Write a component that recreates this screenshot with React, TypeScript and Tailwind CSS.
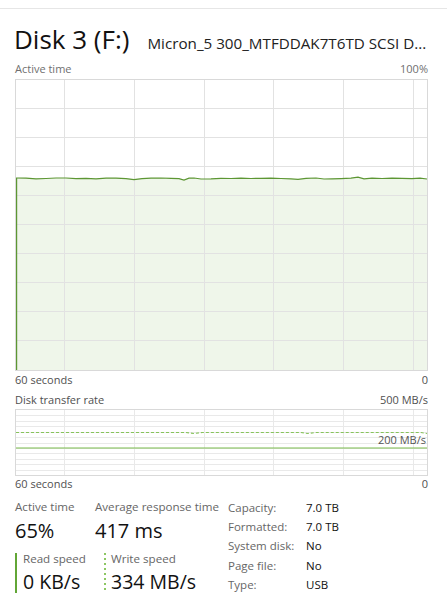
import React from "react";

const W1 = 411;
const H1 = 290;
const vx = [48.5, 118.5, 188.5, 257.5, 327.5, 397.5];

function wave(): string {
  const base = 98;
  const offs: [number, number][] = [
    [0, 0], [10, 0.2], [20, 0.8], [30, 0.5], [40, 0], [50, 0], [60, 0.6], [70, 0.3], [80, 0.8], [90, 0.2],
    [100, 0.1], [110, 0.6], [118, 1.6], [126, 0.6], [135, 0.2], [145, 0], [155, 0.4], [163, 0.6], [168, 2.0], [173, 0.2],
    [178, 0], [185, 1.0], [195, 0.8], [205, 0.3], [215, 0.5], [225, 0.1], [235, 0.5], [245, 0.4], [255, 0.2], [265, 0.5],
    [275, 0.9], [282, 1.4], [290, 0.4], [300, 0], [308, 1.0], [316, 0.9], [325, 0.6], [335, 0.2], [342, -0.8], [348, 0.8],
    [356, 0.2], [366, 0.5], [376, 0.2], [386, 0.3], [396, 0.6], [404, 0.2], [411, 1.0],
  ];
  return offs.map(([x, o], i) => `${i === 0 ? "M" : "L"}${x} ${base + o}`).join(" ");
}

function Chart1() {
  const d = wave();
  const rows = Array.from({ length: 9 }, (_, i) => Math.round((i + 1) * 29.05 - 1) + 0.5);
  return (
    <div className="ml-[15px] mr-[19px] h-[292px] border border-[#d9d9d9]">
      <svg width={W1} height={H1} viewBox={`0 0 ${W1} ${H1}`} className="block">
        <path d={`${d} L${W1} ${H1} L0 ${H1} Z`} fill="#eff6ea" />
        {rows.map((y) => (
          <line key={y} x1={0} x2={W1} y1={y} y2={y} stroke="#e2e2e2" strokeWidth={1} />
        ))}
        {vx.map((x) => (
          <line key={x} x1={x} x2={x} y1={0} y2={H1} stroke="#e2e2e2" strokeWidth={1} />
        ))}
        <path d={d} fill="none" stroke="#5c9633" strokeWidth={1.2} />
        <line x1={0.6} x2={0.6} y1={98} y2={H1} stroke="#5c9633" strokeWidth={1.2} />
      </svg>
    </div>
  );
}

function Chart2() {
  const H = 65;
  const rows = Array.from({ length: 11 }, (_, i) => Math.round(((i + 1) * H) / 12) + 0.5);
  return (
    <div className="ml-[15px] mr-[19px] h-[67px] border border-[#d9d9d9] relative">
      <svg width={W1} height={H} viewBox={`0 0 ${W1} ${H}`} className="block">
        {rows.map((y) => (
          <line key={y} x1={0} x2={W1} y1={y} y2={y} stroke="#e9e9e9" strokeWidth={1} />
        ))}
        {vx.map((x) => (
          <line key={x} x1={x} x2={x} y1={0} y2={H} stroke="#e9e9e9" strokeWidth={1} />
        ))}
        <line x1={0} x2={W1} y1={38} y2={38} stroke="#7bbb4d" strokeWidth={1.2} />
        <path
          d="M0 22.5 L170 22.5 L178 23.5 L186 22.5 L285 22.5 L292 23.5 L300 22.5 L405 22.5 L411 23.5"
          fill="none"
          stroke="#86c35a"
          strokeWidth={1.1}
          strokeDasharray="3 2"
        />
      </svg>
      <div className="absolute right-[1px] top-[23px] text-[11px] leading-[14px] text-[#555]">200 MB/s</div>
    </div>
  );
}

function Row({ l, r, cls = "" }: { l: string; r: string; cls?: string }) {
  return (
    <div className={`ml-[15px] mr-[19px] flex justify-between text-[11px] leading-[14px] h-[14px] ${cls}`}>
      <span>{l}</span>
      <span>{r}</span>
    </div>
  );
}

export default function App() {
  return (
    <div
      className="w-[447px] h-[612px] bg-white overflow-hidden text-[#1a1a1a]"
      style={{ fontFamily: '"Open Sans", "Noto Sans", sans-serif' }}
    >
      <div className="h-[8px]" />
      <div className="border-t border-[#e6e6e6]" />
      <div className="flex items-baseline mt-[13px] pl-[14px] h-[34px]">
        <span className="text-[26px] leading-[34px] text-[#111]">Disk 3 (F:)</span>
        <span className="ml-[18px] text-[15.2px] leading-[20px] text-[#222] whitespace-nowrap">
          Micron_5 300_MTFDDAK7T6TD SCSI D...
        </span>
      </div>
      <Row l="Active time" r="100%" cls="mt-[6px] text-[#6f6f6f]" />
      <div className="h-[3px]" />
      <Chart1 />
      <Row l="60 seconds" r="0" cls="mt-[2px] text-[#505050]" />
      <Row l="Disk transfer rate" r="500 MB/s" cls="mt-[6px] text-[#505050]" />
      <div className="h-[2px]" />
      <Chart2 />
      <Row l="60 seconds" r="0" cls="mt-[1px] text-[#505050]" />

      <div className="ml-[15px] mt-[8px] flex">
        <div className="w-[213px] flex flex-col">
          <div className="flex">
            <div className="w-[80px]">
              <div className="text-[11.6px] leading-[16px] text-[#666]">Active time</div>
              <div className="mt-[3px] text-[20px] leading-[26px] text-[#111]">65%</div>
            </div>
            <div>
              <div className="text-[11.6px] leading-[16px] text-[#666] whitespace-nowrap">Average response time</div>
              <div className="mt-[3px] text-[20px] leading-[26px] text-[#111]">417 ms</div>
            </div>
          </div>
          <div className="flex mt-[7px]">
            <div className="w-[89px] flex">
              <div className="mt-[2px] w-[2px] h-[40px] bg-[#62a636]" />
              <div className="ml-[6px]">
                <div className="text-[11.6px] leading-[16px] text-[#666]">Read speed</div>
                <div className="mt-[2px] text-[19.5px] leading-[26px] text-[#111] whitespace-nowrap">0 KB/s</div>
              </div>
            </div>
            <div className="flex">
              <div className="mt-[2px] w-[2px] h-[40px] bg-[repeating-linear-gradient(to_bottom,#8cc763_0px,#8cc763_2px,transparent_2px,transparent_5px)]" />
              <div className="ml-[5px]">
                <div className="text-[11.6px] leading-[16px] text-[#666]">Write speed</div>
                <div className="mt-[2px] text-[19.5px] leading-[26px] text-[#111] whitespace-nowrap">334 MB/s</div>
              </div>
            </div>
          </div>
        </div>
        <div className="grid grid-cols-[78px_auto] text-[11.5px] leading-[18px]">
          <span className="text-[#666]">Capacity:</span>
          <span className="text-[#111]">7.0 TB</span>
          <span className="text-[#666]">Formatted:</span>
          <span className="text-[#111]">7.0 TB</span>
          <span className="text-[#666]">System disk:</span>
          <span className="text-[#111]">No</span>
          <span className="text-[#666]">Page file:</span>
          <span className="text-[#111]">No</span>
          <span className="text-[#666]">Type:</span>
          <span className="text-[#111]">USB</span>
        </div>
      </div>
    </div>
  );
}
